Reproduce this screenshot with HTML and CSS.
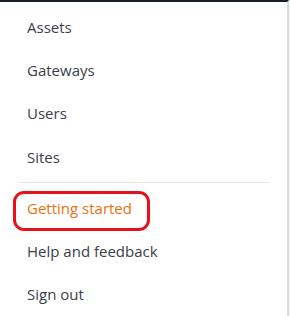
FILE: index.html
```html
<!DOCTYPE html>
<html lang="en">
<head>
    <meta charset="UTF-8">
    <meta name="viewport" content="width=device-width, initial-scale=1.0">
    <title>menu</title>
    <link rel="stylesheet" href="styles.css">
</head>

<body>
    <nav class="menu">
        <ul class="menu-list">
            <li class="item"><a href="#">Assets</a></li>
            <li class="item"><a href="#">Gateways</a></li>
            <li class="item"><a href="#">Users</a></li>
            <li class="item"><a href="#">Sites</a></li>
        </ul>
        <hr class="divider">
        <ul class="menu-list">
            <li class="item active highlight"><a href="#">Getting started</a></li>
            <li class="item"><a href="#">Help and feedback</a></li>
            <li class="item"><a href="#">Sign out</a></li>
        </ul>
    </nav>
</body>
</html>
```

FILE: styles.css
```css
*{
    margin: 0;
    padding: 0;
    box-sizing: border-box;
}
body{
    background-color: #f4f6f4;
    font-family: "Open Sans", "Noto Sans", sans-serif;
    height: 100vh;
    overflow: hidden;
}
.menu{
    background-color: white;
    width: 289px;
    height: 100%;
    border-top: 2px solid #19202c;
    border-right: 2px solid #d9dcdc;
    padding-top: 3px;
}
.menu-list{
    list-style: none;
}
.item{
    position: relative;
    padding: 11.67px 27px;
    font-size: 15px;
    line-height: 20px;
}
.item a{
    color: #3b4049;
    text-decoration: none;
}
.item.active a{
    color: #ec7211;
}
/* annotation box round the item */
.highlight::after{
    content: "";
    position: absolute;
    left: 13px;
    top: 5px;
    width: 131px;
    height: 34px;
    border: 3px solid #e5121c;
    border-radius: 11px;
}
.divider{
    border: none;
    border-top: 1px solid #e4e6e6;
    margin: 3.8px 17px 2.8px 18px;
    width: 252px;
}
```
